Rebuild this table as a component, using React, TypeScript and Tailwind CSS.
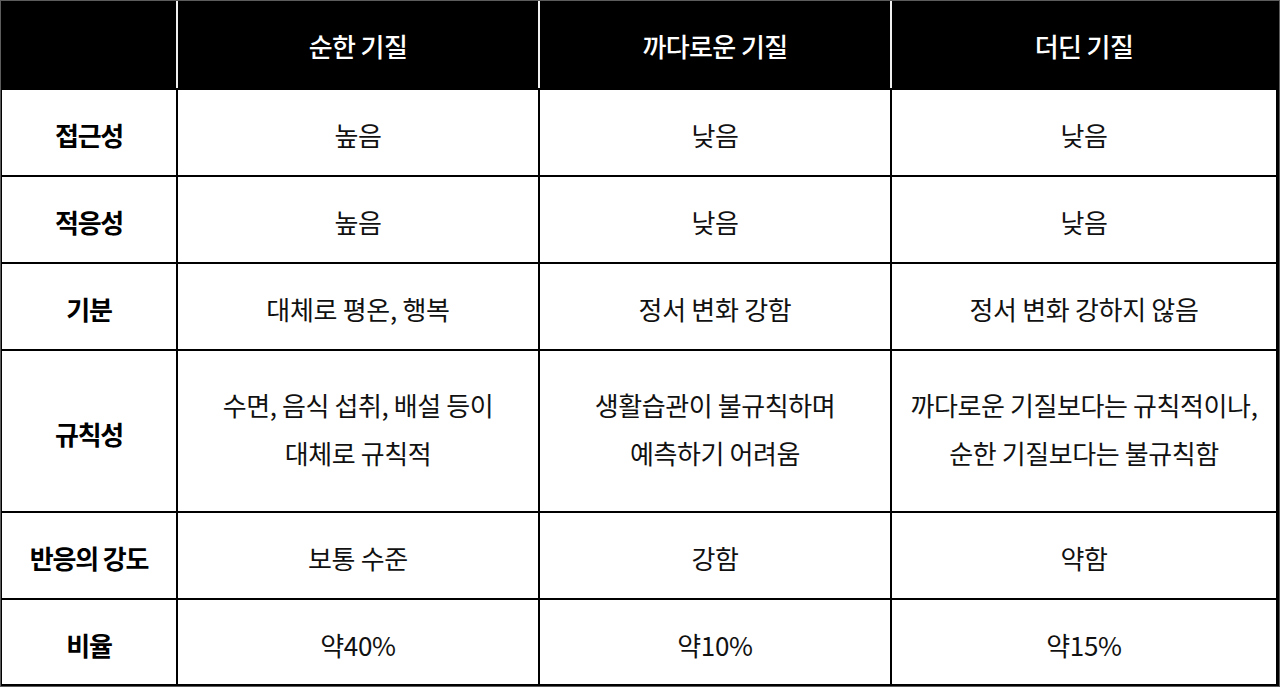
import React from "react";

const headers = ["순한 기질", "까다로운 기질", "더딘 기질"];

const rows: { label: string; cells: string[][] }[] = [
  { label: "접근성", cells: [["높음"], ["낮음"], ["낮음"]] },
  { label: "적응성", cells: [["높음"], ["낮음"], ["낮음"]] },
  { label: "기분", cells: [["대체로 평온, 행복"], ["정서 변화 강함"], ["정서 변화 강하지 않음"]] },
  {
    label: "규칙성",
    cells: [
      ["수면, 음식 섭취, 배설 등이", "대체로 규칙적"],
      ["생활습관이 불규칙하며", "예측하기 어려움"],
      ["까다로운 기질보다는 규칙적이나,", "순한 기질보다는 불규칙함"],
    ],
  },
  { label: "반응의 강도", cells: [["보통 수준"], ["강함"], ["약함"]] },
  { label: "비율", cells: [["약40%"], ["약10%"], ["약15%"]] },
];

export default function App() {
  return (
    <div
      className="w-[1280px] h-[687px] border border-[#5c5c5c] bg-black pl-[1px] pr-[2px] pb-[2px]"
      style={{ fontFamily: '"Noto Sans CJK KR", "Noto Sans", sans-serif' }}
    >
      <div className="grid grid-cols-[174px_360px_350px_384px] grid-rows-[87px_85px_85px_85px_160px_85px_84px] gap-[2px] h-full">
        <div className="bg-black" />
        {headers.map((h) => (
          <div
            key={h}
            className="bg-black ml-[-2px] border-l-2 border-[#f0f0f0] flex items-center justify-center text-white text-[26px] font-medium tracking-[-0.6px] pt-[2px]"
          >
            {h}
          </div>
        ))}
        {rows.map((r) => (
          <React.Fragment key={r.label}>
            <div className="bg-white flex items-center justify-center text-black text-[26px] font-bold tracking-[-1.2px] pt-[4px]">
              {r.label}
            </div>
            {r.cells.map((c, i) =>
              c.length > 1 ? (
                <div
                  key={i}
                  className="bg-white flex flex-col items-center justify-center text-[#111] text-[26px] tracking-[-0.4px] leading-[48px] pb-[4px]"
                >
                  {c.map((line) => (
                    <span key={line}>{line}</span>
                  ))}
                </div>
              ) : (
                <div
                  key={i}
                  className="bg-white flex items-center justify-center text-[#111] text-[26px] tracking-[-0.3px] pt-[4px]"
                >
                  {c[0]}
                </div>
              )
            )}
          </React.Fragment>
        ))}
      </div>
    </div>
  );
}
